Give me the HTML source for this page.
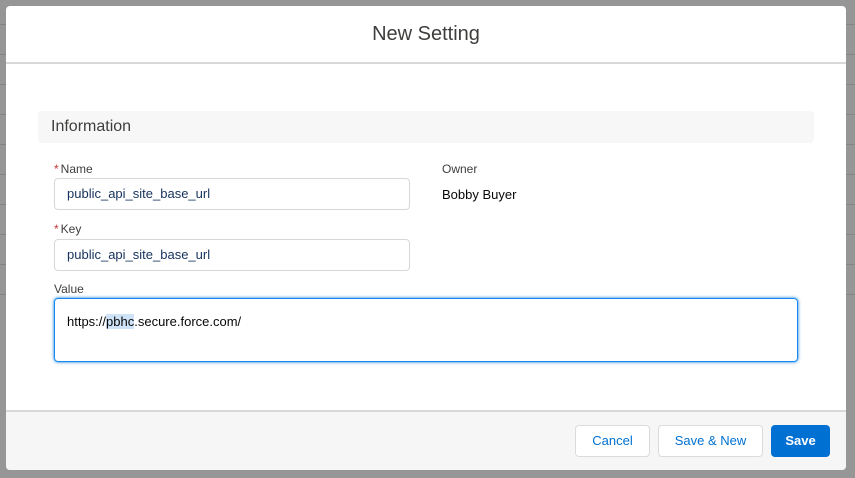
<!DOCTYPE html>
<html><head><style>
*{box-sizing:border-box;margin:0;padding:0}
body{width:855px;height:478px;background:#969696;font-family:"Liberation Sans",sans-serif;position:relative;overflow:hidden;color:#080707}
.bgl{position:absolute;left:0;width:6px;border-bottom:1px solid #858585}
.bgr{position:absolute;left:846px;width:9px;border-bottom:1px solid #858585}
.modal{position:absolute;left:6px;top:6px;width:840px;height:464px;background:#fff;border-radius:4px;overflow:hidden}
.hdr{height:58px;border-bottom:2px solid #d8d8d8;text-align:center;font-size:20px;line-height:56px;color:#3e3e3c}
.sec{position:absolute;left:32px;top:105px;width:776px;height:32px;background:#f7f7f7;border-radius:4px;font-size:16px;line-height:32px;padding-left:13px;color:#3e3e3c}
.lbl{position:absolute;font-size:12px;color:#3e3e3c}
.lbl b{color:#c23934;font-weight:normal;margin-right:2px}
.inp{position:absolute;border:1px solid #d9d7d5;border-radius:4px;font-size:13px;padding-left:12px;color:#16325c;line-height:30px}
.ftr{position:absolute;left:0;top:404px;width:840px;height:60px;background:#f6f6f6;border-top:2px solid #d8d8d8}
.btn{position:absolute;top:13px;height:32px;border:1px solid #dddbda;border-radius:4px;background:#fff;color:#0070d2;font-size:13px;text-align:center;line-height:30px}
</style></head><body>
<div class="bgl" style="top:0;height:25px"></div><div class="bgl" style="top:25px;height:30px"></div><div class="bgl" style="top:55px;height:30px"></div><div class="bgl" style="top:85px;height:30px"></div><div class="bgl" style="top:115px;height:30px"></div><div class="bgl" style="top:145px;height:30px"></div><div class="bgl" style="top:175px;height:30px"></div><div class="bgl" style="top:205px;height:30px"></div><div class="bgl" style="top:235px;height:30px"></div><div class="bgl" style="top:265px;height:30px"></div>
<div class="bgr" style="top:0;height:25px"></div><div class="bgr" style="top:25px;height:30px"></div><div class="bgr" style="top:55px;height:30px"></div><div class="bgr" style="top:85px;height:30px"></div><div class="bgr" style="top:115px;height:30px"></div><div class="bgr" style="top:145px;height:30px"></div><div class="bgr" style="top:175px;height:30px"></div><div class="bgr" style="top:205px;height:30px"></div><div class="bgr" style="top:235px;height:30px"></div><div class="bgr" style="top:265px;height:30px"></div>
<div class="modal">
<div class="hdr">New Setting</div>
<div class="sec">Information</div>
<div class="lbl" style="left:48px;top:156px"><b>*</b>Name</div>
<div class="inp" style="left:48px;top:172px;width:356px;height:32px">public_api_site_base_url</div>
<div class="lbl" style="left:436px;top:156px">Owner</div>
<div style="position:absolute;left:436px;top:181px;font-size:13px;color:#080707">Bobby Buyer</div>
<div class="lbl" style="left:48px;top:216px"><b>*</b>Key</div>
<div class="inp" style="left:48px;top:233px;width:356px;height:32px">public_api_site_base_url</div>
<div class="lbl" style="left:48px;top:276px">Value</div>
<div class="inp" style="left:48px;top:292px;width:744px;height:64px;border-color:#1589ee;box-shadow:0 0 3px #0070d2;line-height:16px;padding-top:15px;color:#080707">https://<span style="background:#cfe3f8">pbhc</span>.secure.force.com/</div>
<div class="ftr">
<div class="btn" style="left:569px;width:75px">Cancel</div>
<div class="btn" style="left:652px;width:105px">Save &amp; New</div>
<div class="btn" style="left:765px;width:59px;background:#0070d2;border-color:#0070d2;color:#fff;font-weight:bold">Save</div>
</div>
</div>
</body></html>
